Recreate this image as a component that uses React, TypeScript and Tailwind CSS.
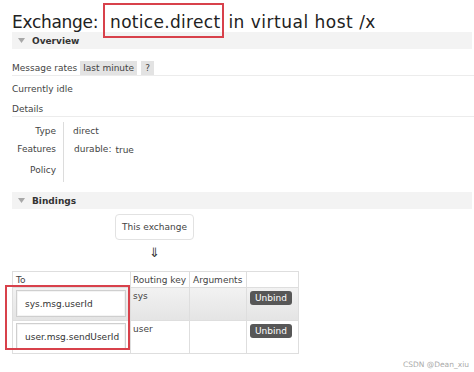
import React from 'react';

const Tri = () => (
    <svg width="7" height="5" viewBox="0 0 7 5" className="shrink-0">
        <path d="M0 0 L7 0 L3.5 5 Z" fill="#a8a8a8" />
    </svg>
);

const SectionBar = ({ title, className }: { title: string; className?: string }) => (
    <div className={"ml-[12px] mr-[2px] h-[17px] bg-[#f3f3f3] flex items-center pl-[6px] gap-[7px] font-bold text-[9px] text-[#333] " + (className ?? '')}>
        <Tri />
        <span>{title}</span>
    </div>
);

const bindings = [
    { to: 'sys.msg.userId', key: 'sys', shaded: true },
    { to: 'user.msg.sendUserId', key: 'user', shaded: false },
];

export default function App() {
    return (
        <div className="relative w-[474px] h-[372px] overflow-hidden bg-white text-[#444] text-[9px] leading-[12px] font-['DejaVu_Sans',Verdana,sans-serif]">
            <h1 className="h-[32px] pl-[12px] pt-[14px] text-[17px] leading-[17px] text-[#222] whitespace-nowrap">
                <span className="tracking-[-0.3px]">Exchange:</span>
                <span className="relative inline-block ml-[12px] tracking-[0.3px]">
                    notice.direct
                    <span className="absolute -left-[7px] -right-[4px] -top-[11px] -bottom-[7px] border-2 border-solid border-[#d8414b]" />
                </span>
                <span className="ml-[8px] tracking-[0.5px]">in virtual host /x</span>
            </h1>

            <SectionBar title="Overview" />

            <div className="ml-[12px] mt-[12px] h-[15px] border-b border-[#ececec] flex items-start gap-[3px]">
                <span className="leading-[14px]">Message rates</span>
                <span className="bg-[#e3e3e3] px-[3px] leading-[14px]">last minute</span>
                <span className="bg-[#e3e3e3] px-[4px] ml-[1px] leading-[14px]">?</span>
            </div>

            <div className="ml-[12px] h-[26px] flex items-center">Currently idle</div>
            <div className="ml-[12px] h-[15px] flex items-center border-b border-[#ececec]">Details</div>

            <div className="ml-[12px] mt-[5px] flex flex-col">
                <div className="flex h-[18px]">
                    <div className="w-[52px] border-r border-[#dcdcdc] text-right pr-[7px] flex items-center justify-end">Type</div>
                    <div className="pl-[9px] flex items-center">direct</div>
                </div>
                <div className="flex h-[18px]">
                    <div className="w-[52px] border-r border-[#dcdcdc] text-right pr-[7px] flex items-center justify-end">Features</div>
                    <div className="pl-[10px] flex items-center">
                        durable:<span className="relative top-[1px] ml-[4px]">true</span>
                    </div>
                </div>
                <div className="flex h-[24px]">
                    <div className="w-[52px] border-r border-[#dcdcdc] text-right pr-[7px] flex items-center justify-end">Policy</div>
                    <div className="pl-[9px]" />
                </div>
            </div>

            <SectionBar title="Bindings" className="mt-[10px] h-[16px]" />

            <div className="ml-[115px] mt-[5px] w-[79px] h-[26px] border border-[#e2e2e2] rounded-[4px] flex items-center justify-center">
                This exchange
            </div>
            <div className="ml-[115px] w-[79px] h-[26px] flex items-center justify-center text-[13px] text-[#333]">⇓</div>

            <div className="relative ml-[12px] mt-[5px] w-[286px]">
                <table className="w-[286px] border-collapse table-fixed">
                    <colgroup>
                        <col className="w-[118px]" />
                        <col className="w-[59px]" />
                        <col className="w-[57px]" />
                        <col className="w-[52px]" />
                    </colgroup>
                    <thead>
                        <tr className="h-[16px]">
                            <th className="border border-[#dedede] text-left font-normal pl-[3px] align-middle">To</th>
                            <th className="border border-[#dedede] text-left font-normal pl-[2px] align-middle whitespace-nowrap">Routing key</th>
                            <th className="border border-[#dedede] text-left font-normal pl-[3px] align-middle">Arguments</th>
                            <th className="border border-[#dedede]" />
                        </tr>
                    </thead>
                    <tbody>
                        {bindings.map((b) => (
                            <tr key={b.to} className={'h-[33px] ' + (b.shaded ? 'bg-linear-to-b from-[#f2f2f2] to-[#e4e4e4]' : 'bg-white')}>
                                <td className="border border-[#dedede] align-top pl-[3px] pt-[2px]">
                                    <div className="w-[110px] h-[27px] border border-[#cfcfcf] bg-white shadow-[inset_0_0_0_1px_#f4f4f4] flex items-center pl-[8px] text-[#333] whitespace-nowrap">
                                        {b.to}
                                    </div>
                                </td>
                                <td className="border border-[#dedede] align-top pl-[2px] pt-[2px]">{b.key}</td>
                                <td className="border border-[#dedede]" />
                                <td className="border border-[#dedede] align-top pl-[3px] pt-[3px]">
                                    <span className="inline-flex items-center justify-center w-[42px] h-[14px] rounded-[3px] bg-[#575757] text-white">Unbind</span>
                                </td>
                            </tr>
                        ))}
                    </tbody>
                </table>
                <div className="absolute left-[-7px] top-[14px] w-[125px] h-[65px] border-2 border-solid border-[#d8414b]" />
            </div>

            <div className="mt-[5px] pr-[5px] text-right text-[7.5px] text-[#aaa]">CSDN @Dean_xiu</div>
        </div>
    );
}
